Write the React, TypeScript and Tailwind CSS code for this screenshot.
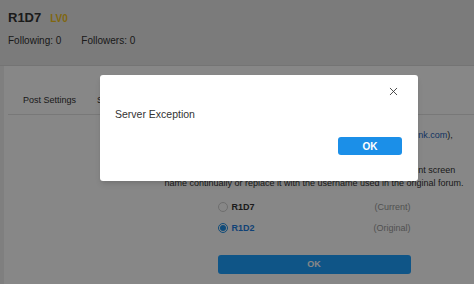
import { X } from 'lucide-react'

export default function App() {
  return (
    <div
      className="relative h-[284px] w-[474px] overflow-hidden bg-[#f0f0f0]"
      style={{ fontFamily: '"Liberation Sans", Arial, sans-serif' }}
    >
      {/* Profile header */}
      <header className="h-[66px] bg-[#e8e8e8] px-2 pt-[8px] border-b border-[#dcdcdc]">
        <div className="flex items-baseline gap-[9px]">
          <h1 className="text-[13px] font-bold text-[#333]">R1D7</h1>
          <span className="text-[10px] font-bold text-[#f2c21b]">LV0</span>
        </div>
        <div className="mt-[5px] flex gap-[20px] text-[10px] text-[#333]">
          <span>Following: 0</span>
          <span>Followers: 0</span>
        </div>
      </header>

      {/* Settings card */}
      <main className="ml-[4px] h-[218px] w-[520px] bg-white pt-[28px]">
        <nav className="mx-[4px] flex gap-[21px] border-b border-[#e3e3e3] pb-[6px] pl-[15px] text-[9px] text-[#333]">
          <span>Post Settings</span>
          <span>Security Settings</span>
        </nav>

        <section className="ml-[154px] w-[312px] whitespace-nowrap text-center text-[9px] leading-[13px] text-[#333]">
          <p className="mt-[14px]">
            Your account is linked with the original forum (<span className="text-[#1e63b8]">community.tp-link.com</span>),
          </p>
          <p className="mt-[22px]">
            If you do not want to change it, you can keep using your current screen
            <br />
            name continually or replace it with the username used in the original forum.
          </p>

          <div className="mx-auto mt-[7px] w-[193px] text-left">
            <label className="flex h-[21px] items-center">
              <span className="h-[10px] w-[10px] rounded-full border border-[#cfcfcf] bg-white" />
              <span className="ml-[4px] font-bold text-[#333]">R1D7</span>
              <span className="ml-auto text-[#999]">(Current)</span>
            </label>
            <label className="flex h-[21px] items-center">
              <span className="flex h-[10px] w-[10px] items-center justify-center rounded-full border border-[#1f8fe6] bg-white">
                <span className="h-[6px] w-[6px] rounded-full bg-[#1f8fe6]" />
              </span>
              <span className="ml-[4px] font-bold text-[#1f7de0]">R1D2</span>
              <span className="ml-auto text-[#999]">(Original)</span>
            </label>
            <button className="mt-[16px] h-[19px] w-full rounded-[3px] bg-[#1ea0ff] text-[9px] font-bold text-white">
              OK
            </button>
          </div>
        </section>
      </main>

      {/* Overlay */}
      <div className="absolute inset-0 bg-black/[0.47]" />

      {/* Dialog */}
      <div className="absolute left-[100px] top-[75px] flex h-[106px] w-[318px] flex-col rounded-[3px] bg-white shadow-md">
        <div className="flex h-[32px] items-start justify-end pr-[18px] pt-[10px] text-[#333]">
          <X size={13} strokeWidth={1.6} />
        </div>
        <p className="pl-[15px] text-[10.5px] leading-[14px] text-[#333]">Server Exception</p>
        <div className="mt-[16px] flex justify-end pr-[16px]">
          <button className="h-[18px] w-[64px] rounded-[3px] bg-[#1b8fe8] text-[10px] font-bold text-white">
            OK
          </button>
        </div>
      </div>
    </div>
  )
}
